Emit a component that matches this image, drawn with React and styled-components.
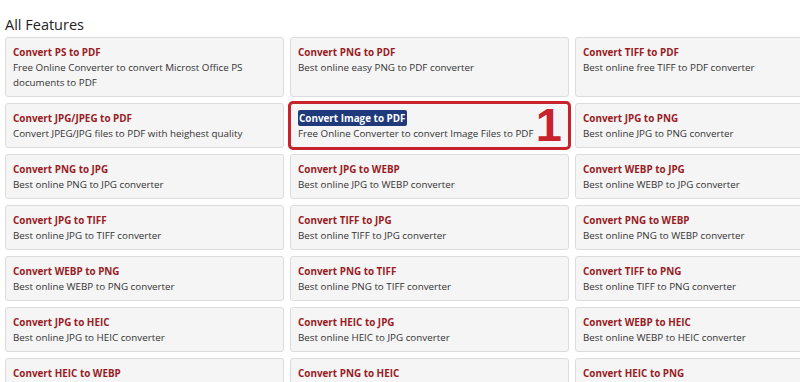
import React from "react";
import styled, { createGlobalStyle } from "styled-components";

const Global = createGlobalStyle`
  html, body {
    margin: 0;
    padding: 0;
    background: #fff;
    overflow: hidden;
  }
  body {
    font-family: "Open Sans", "Noto Sans", "Liberation Sans", sans-serif;
  }
`;

const Page = styled.section`
  width: 800px;
  height: 382px;
  overflow: hidden;
  padding: 0 0 0 5px;
  box-sizing: border-box;
`;

const Heading = styled.h2`
  margin: 0;
  padding: 16px 0 3px;
  font-size: 14.5px;
  font-weight: 400;
  line-height: 18px;
  color: #222;
`;

const Grid = styled.div`
  display: grid;
  grid-template-columns: repeat(3, 279px);
  column-gap: 6px;
  row-gap: 6px;
  width: 860px;
`;

const Card = styled.a`
  position: relative;
  display: block;
  box-sizing: border-box;
  padding: 7px 7px 6px;
  background: #f5f5f5;
  border: 1px solid #dcdcdc;
  border-radius: 3px;
  text-decoration: none;
  outline: ${(p) => (p.$marked ? "3px solid #c8222c" : "none")};
  outline-offset: ${(p) => (p.$marked ? "-1px" : "0")};
`;

const Title = styled.div`
  font-size: 9.9px;
  font-weight: 700;
  line-height: 15px;
  color: #9a1b1f;
`;

const Selected = styled.span`
  background: #1e3a7a;
  color: #fff;
  border-radius: 2px;
  padding: 1px 1px;
`;

const Desc = styled.div`
  font-size: 9.8px;
  line-height: 15px;
  color: #333;
`;

const Badge = styled.span`
  position: absolute;
  right: 6px;
  top: -3px;
  font-family: "Liberation Sans", Arial, sans-serif;
  font-size: 47px;
  font-weight: 700;
  line-height: 47px;
  color: #c8222c;
`;

const features = [
  ["PS to PDF", "Free Online Converter to convert Microst Office PS documents to PDF"],
  ["PNG to PDF", "Best online easy PNG to PDF converter"],
  ["TIFF to PDF", "Best online free TIFF to PDF converter"],
  ["JPG/JPEG to PDF", "Convert JPEG/JPG files to PDF with heighest quality"],
  ["Image to PDF", "Free Online Converter to convert Image Files to PDF", true],
  ["JPG to PNG", "Best online JPG to PNG converter"],
  ["PNG to JPG"],
  ["JPG to WEBP"],
  ["WEBP to JPG"],
  ["JPG to TIFF"],
  ["TIFF to JPG"],
  ["PNG to WEBP"],
  ["WEBP to PNG"],
  ["PNG to TIFF"],
  ["TIFF to PNG"],
  ["JPG to HEIC"],
  ["HEIC to JPG"],
  ["WEBP to HEIC"],
  ["HEIC to WEBP"],
  ["PNG to HEIC"],
  ["HEIC to PNG"],
];

export default function App() {
  return (
    <Page>
      <Global />
      <Heading>All Features</Heading>
      <Grid>
        {features.map(([name, desc, marked]) => (
          <Card key={name} $marked={marked}>
            <Title>
              {marked ? <Selected>Convert {name}</Selected> : `Convert ${name}`}
            </Title>
            <Desc>{desc || `Best online ${name} converter`}</Desc>
            {marked && <Badge>1</Badge>}
          </Card>
        ))}
      </Grid>
    </Page>
  );
}
